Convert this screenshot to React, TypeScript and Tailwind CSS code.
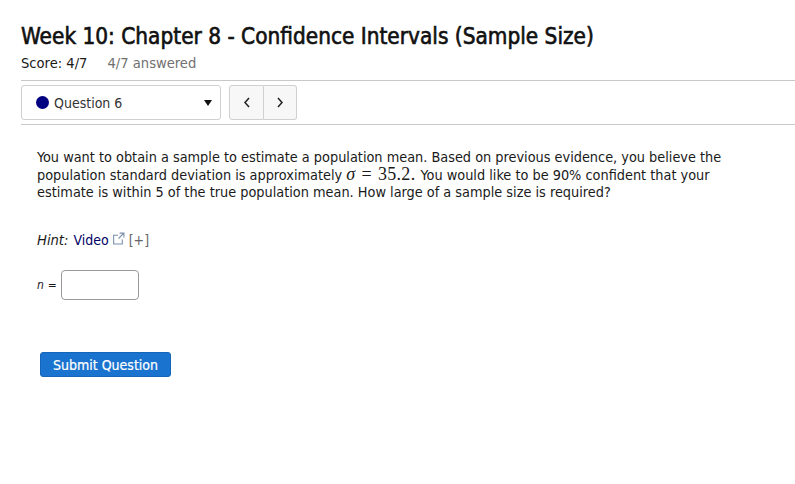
export default function App() {
  return (
    <div className="min-h-[484px] bg-white text-[#1a1a1a] font-['DejaVu_Sans_Condensed','DejaVu_Sans',sans-serif] overflow-hidden">
      <div className="pl-[21px] pt-[22px]">
        <h1 className="text-[22.4px] leading-[28px] font-normal text-[#111] [-webkit-text-stroke:0.6px_#111]">Week 10: Chapter 8 - Confidence Intervals (Sample Size)</h1>
        <div className="mt-[4px] flex text-[14.6px] leading-[18px] gap-[20px]">
          <span>Score: 4/7</span>
          <span className="text-[#707070]">4/7 answered</span>
        </div>
        <div className="mt-[8px] border-t border-b border-[#c8c8c8] py-[4px] flex h-[45px] gap-[8px]">
          <div className="w-[200px] h-[35px] border border-[#d0d0d0] rounded-[3px] flex items-center pl-[14px] pr-[8px]">
            <span className="w-[13px] h-[13px] rounded-full bg-[#000080] mr-[5px]"></span>
            <span className="text-[14px] text-[#333] mt-[1px]">Question 6</span>
            <svg className="ml-auto mt-[1px]" width="8" height="6" viewBox="0 0 8 6"><path d="M0 0h8L4 6z" fill="#111" /></svg>
          </div>
          <div className="flex h-[35px]">
            <div className="w-[35px] border border-[#d0d0d0] rounded-l-[3px] bg-[#f7f7f7] flex items-center justify-center">
              <svg width="8" height="11" viewBox="0 0 8 11" fill="none" stroke="#222" strokeWidth="1.5"><path d="M6 1 2 5.5 6 10" /></svg>
            </div>
            <div className="w-[33px] border border-l-0 border-[#d0d0d0] rounded-r-[3px] bg-[#f7f7f7] flex items-center justify-center">
              <svg width="8" height="11" viewBox="0 0 8 11" fill="none" stroke="#222" strokeWidth="1.5"><path d="M2 1 6 5.5 2 10" /></svg>
            </div>
          </div>
        </div>
      </div>
      <div className="pl-[37px] pt-[24px]">
        <p className="w-[700px] text-[14.35px] leading-[17px] text-[#1a1a1a]">
          You want to obtain a sample to estimate a population mean. Based on previous evidence, you believe the population standard deviation is approximately{' '}
          <span className="inline-block leading-[17px] font-['Liberation_Serif',serif] text-[18px] tracking-[0.3px] mr-[1px]"><i>σ</i><span className="mx-[6px]">=</span>35.2.</span>{' '}
          You would like to be 90% confident that your estimate is within 5 of the true population mean. How large of a sample size is required?
        </p>
        <div className="mt-[30px] text-[14px] leading-[18px] flex items-center">
          <i className="text-[14.6px]">Hint:</i>
          <span className="ml-[5px] text-[#000066]">Video</span>
          <svg className="ml-[3px] mb-[4px]" width="13" height="13" viewBox="0 0 12 12" fill="none" stroke="#7a8fb0" strokeWidth="1"><path d="M9.5 7v4H1.5V3h4M7 1h4v4M11 1 6 6" /></svg>
          <span className="ml-[4px] text-[#666]">[+]</span>
        </div>
        <div className="mt-[21px] flex items-center text-[12px]">
          <i>n</i><span className="ml-[4px]">=</span>
          <div className="ml-[4px] w-[78px] h-[30px] border border-[#999] rounded-[4px] bg-white"></div>
        </div>
        <button className="mt-[52px] ml-[3px] block w-[131px] h-[25px] bg-[#1a73cf] border border-[#1565b8] rounded-[3px] text-white text-[14px] leading-[22px] [-webkit-text-stroke:0.2px_#fff]">Submit Question</button>
      </div>
    </div>
  );
}
